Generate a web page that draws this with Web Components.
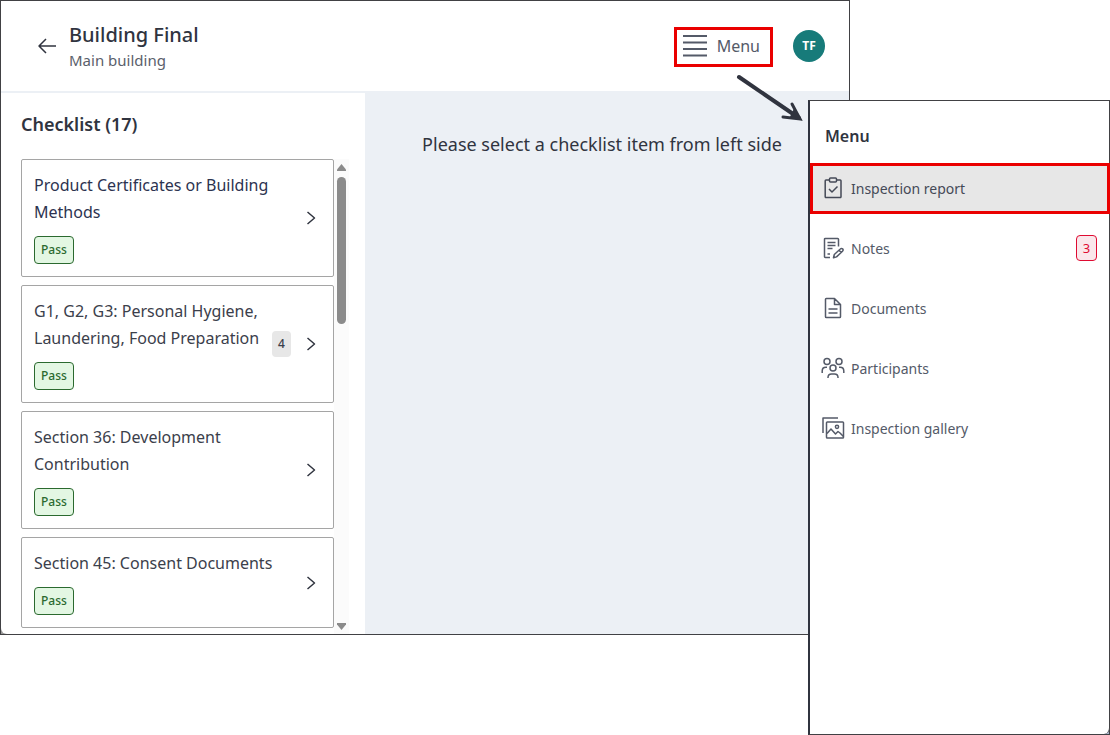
<!DOCTYPE html>
<html lang="en">
<head>
<meta charset="utf-8">
<title>Building Final</title>
<style>
  body { margin: 0; background: #fff; color: #30343f; font: 16px/24px "Noto Sans", sans-serif; }
</style>
</head>
<body>
<inspection-page>
  <app-window slot="window">
    <app-header slot="header" initials="TF">
      <span slot="title">Building Final</span>
      <span slot="subtitle">Main building</span>
    </app-header>
    <check-list slot="side">
      <span slot="heading">Checklist (17)</span>
      <check-item status="Pass" accent>Product Certificates or Building Methods</check-item>
      <check-item status="Pass" count="4">G1, G2, G3: Personal Hygiene, Laundering, Food Preparation</check-item>
      <check-item status="Pass">Section 36: Development Contribution</check-item>
      <check-item status="Pass">Section 45: Consent Documents</check-item>
    </check-list>
    <span>Please select a checklist item from left side</span>
  </app-window>
  <menu-drawer slot="drawer">
    <span slot="heading">Menu</span>
    <menu-item icon="report" current>Inspection report</menu-item>
    <menu-item icon="notes" count="3">Notes</menu-item>
    <menu-item icon="document">Documents</menu-item>
    <menu-item icon="people">Participants</menu-item>
    <menu-item icon="gallery">Inspection gallery</menu-item>
  </menu-drawer>
  <callout-arrow slot="callout"></callout-arrow>
</inspection-page>

<script>
const ICONS = {
  back: '<path d="M21 12H4M11 5l-7 7 7 7"/>',
  chevron: '<path d="M8.500 6l7 6-7 6"/>',
  lines: '<path stroke-width="2" d="M0 2h24M0 8.500h24M0 15h24M0 21.500h24"/>',
  report: '<path d="M8.500 4H5a.8.8 0 0 0-.8.8v16a.8.8 0 0 0 .8.8h14.200a.8.8 0 0 0 .8-.8v-16a.8.8 0 0 0-.8-.8h-3.700"/><rect x="8.500" y="2" width="7" height="4" rx="1"/><path d="M8 13l3 3 5.500-5.500"/>',
  notes: '<path d="M17.500 10.500V3.200a.8.8 0 0 0-.8-.8H4.300a.8.8 0 0 0-.8.8v17.500a.8.8 0 0 0 .8.8H9M6.500 6.500h8M6.500 9.500h8M6.500 12.500h5M6.500 18h2.500"/><path d="M12.500 21.800l.8-3.300 6-5.500c.8-.8 1.600-.8 2.300-.1s.7 1.500-.1 2.300l-6 5.700zM18 14.200l2.400 2.400"/>',
  document: '<path d="M13.500 2.500H5.300a.8.8 0 0 0-.8.8v17.400a.8.8 0 0 0 .8.8h13.400a.8.8 0 0 0 .8-.8V8.500zM13.500 2.500v6h6M7.500 13h9M7.500 17h9"/>',
  people: '<circle cx="6" cy="5.500" r="3"/><circle cx="18" cy="5.500" r="3"/><circle cx="12" cy="12" r="3"/><path d="M7 22v-.5C7 19.200 8.500 18 10.500 18h3c2 0 3.500 1.200 3.500 3.500v.5M1.200 17v-2c0-2.300 1.500-3.700 3.700-3.700H6M22.800 17v-2c0-2.300-1.500-3.700-3.700-3.700H18"/>',
  gallery: '<path d="M17 2H2v15"/><rect x="5.500" y="6" width="17" height="16" rx=".8"/><circle cx="16" cy="10.800" r="1.600"/><path d="M6 17.500l4-4.500 4.500 5 2.500-2.500 2 1.500 3.500 3.500"/>'
};

// Registers an element whose shadow root is cloned from the given markup.
function define(name, markup, setup) {
  const template = document.createElement('template');
  template.innerHTML = '<style>*{box-sizing:border-box}:host{display:block;box-sizing:border-box}button{font:inherit;color:inherit;margin:0;padding:0;border:0;background:none;text-align:left;cursor:pointer}</style>' + markup;
  customElements.define(name, class extends HTMLElement {
    constructor() {
      super();
      this.attachShadow({ mode: 'open' }).append(template.content.cloneNode(true));
    }
    connectedCallback() { if (setup) setup(this, this.shadowRoot); }
  });
}

define('ui-icon', `<style>
  :host { flex: none; width: 24px; height: 24px; }
  svg { display: block; width: 100%; height: 100%; fill: none; stroke: currentColor; stroke-width: 1.5; stroke-linejoin: round; }
</style><svg viewBox="0 0 24 24" aria-hidden="true"></svg>`, (el, root) => {
  root.querySelector('svg').innerHTML = ICONS[el.getAttribute('name')];
});

define('inspection-page', `<style>
  :host { display: grid; position: relative; min-height: 100vh;
    grid-template-columns: 1fr 42px 260px; grid-template-rows: 100px 1fr 100px; }
  slot[name=window]::slotted(*) { grid-area: 1 / 1 / 3 / 3; }
  slot[name=drawer]::slotted(*) { grid-area: 2 / 2 / 4 / 4; }
</style>
<slot name="window"></slot><slot name="drawer"></slot><slot name="callout"></slot>`);

define('callout-arrow', `<style>
  :host { position: absolute; top: 70px; right: 300px; width: 80px; height: 60px; pointer-events: none; }
  svg { display: block; fill: none; stroke: #30343f; stroke-width: 4; stroke-linecap: round; stroke-linejoin: miter; }
</style>
<svg width="80" height="60" viewBox="0 0 80 60" aria-hidden="true"><path d="M9 7l60 41"/><path stroke-width="3" d="M62 34l8 15-17-2"/><path stroke-width="2" fill="#30343f" d="M64 41l6 8-9-2z"/></svg>`);

define('app-window', `<style>
  :host { display: flex; flex-direction: column; border: 1px solid #414144; background: #9a9a9a; }
  .body { flex: 1; display: grid; grid-template-columns: 364px 1fr; }
  main { background: #ecf0f5; padding: 37px 10px 0 0; text-align: center; font-size: 18px; line-height: 28px; }
</style>
<slot name="header"></slot>
<div class="body"><slot name="side"></slot><main><slot></slot></main></div>`);

define('app-header', `<style>
  :host { background: #fff; border-bottom: 2px solid #ecf0f5; }
  header { display: flex; align-items: center; height: 90px; padding: 0 24px 0 34px; }
  .back { display: flex; margin-right: 10px; }
  .names { flex: 1; display: flex; flex-direction: column; }
  h1 { margin: 0; font-size: 20px; line-height: 28px; font-weight: 500; }
  p { margin: 0; font-size: 15px; line-height: 22px; color: #5a606b; }
  .menu { display: flex; align-items: center; gap: 10px; height: 40px; padding: 0 10px 2px 6px; margin: 2px 20px 0 0;
    border: 3px solid #ea0000; color: #545a68; }
  .avatar { width: 32px; height: 32px; border-radius: 50%; background: #177b7a; color: #fff;
    font-size: 12px; line-height: 32px; font-weight: 700; text-align: center; }
</style>
<header>
  <button class="back" aria-label="Back"><ui-icon name="back"></ui-icon></button>
  <div class="names"><h1><slot name="title"></slot></h1><p><slot name="subtitle"></slot></p></div>
  <button class="menu"><ui-icon name="lines"></ui-icon>Menu</button>
  <div class="avatar"></div>
</header>`, (el, root) => {
  root.querySelector('.avatar').textContent = el.getAttribute('initials');
});

define('check-list', `<style>
  :host { background: #fff; border-bottom-left-radius: 6px; padding: 18px 16px 0 20px; display: flex; flex-direction: column; }
  h2 { margin: 0 0 22px; font-size: 18px; line-height: 26px; font-weight: 600; }
  .area { flex: 1; display: grid; grid-template-columns: 1fr 15px; }
  .items { display: flex; flex-direction: column; gap: 8px; padding-bottom: 6px; }
  .bar { display: flex; flex-direction: column; align-items: center; gap: 6px; padding: 5px 0 4px; background: #fbfbfb; }
  .bar svg { fill: #8b8b8b; }
  .thumb { width: 9px; height: 147px; border-radius: 5px; background: #8b8b8b; margin-bottom: auto; }
</style>
<h2><slot name="heading"></slot></h2>
<div class="area">
  <div class="items"><slot></slot></div>
  <div class="bar" aria-hidden="true">
    <svg width="9" height="7"><path d="M4.500 0L9 5.500V7H0V5.500z"/></svg>
    <div class="thumb"></div>
    <svg width="9" height="7"><path d="M4.500 7L9 1.500V0H0V1.500z"/></svg>
  </div>
</div>`);

define('check-item', `<style>
  :host { color: #3b404b; }
  :host([accent]) { color: #2c3350; }
  button { display: flex; align-items: center; width: 100%; padding: 12px 10px 12px 12px; border: 1px solid #a5a5a5; border-radius: 2px; line-height: 27px; }
  .text { flex: 1; display: flex; flex-direction: column; align-items: flex-start; gap: 10px; }
  .status { height: 28px; padding: 0 6px; border: 1px solid #2b6a2f; border-radius: 4px; background: #e3f7e3; color: #2b6a2f; font-size: 12px; line-height: 26px; font-weight: 500; }
  .count { width: 19px; height: 26px; margin-right: 8px; border-radius: 4px; background: #e7e7e7; font-size: 12px; line-height: 26px; font-weight: 500; text-align: center; }
  .count:empty { display: none; }
  ui-icon { color: #30343f; }
</style>
<button><span class="text"><span><slot></slot></span><span class="status"></span></span><span class="count"></span><ui-icon name="chevron"></ui-icon></button>`, (el, root) => {
  root.querySelector('.status').textContent = el.getAttribute('status');
  root.querySelector('.count').textContent = el.getAttribute('count') || '';
});

define('menu-drawer', `<style>
  :host { display: flex; border: 1px solid #414144; border-left: 2px solid #30343f; background: #aab4cc; }
  nav { flex: 1; display: flex; flex-direction: column; gap: 9px; margin-right: -1px; padding: 23px 0; background: #fff; border-right: 1px solid #414144; border-bottom-right-radius: 6px; min-width: 0; }
  h2 { margin: 0 0 6px; padding-left: 15px; font-size: 16px; line-height: 24px; font-weight: 600; }
</style>
<nav><h2><slot name="heading"></slot></h2><slot></slot></nav>`);

define('menu-item', `<style>
  :host { color: #545a68; margin-right: -1px; }
  :host([current]) { background: #e7e7e7; color: #454a57; outline: 3px solid #ea0000; outline-offset: -3px; }
  button { display: flex; align-items: flex-start; gap: 6px; width: 100%; height: 51px; padding: 12px 13px 0 11px; font-size: 14px; line-height: 28px; }
  ui-icon { height: 26px; }
  .label { flex: 1; }
  .count { width: 21px; height: 26px; border: 1px solid #df0b32; border-radius: 4px; background: #fae7eb; color: #df0b32; font-size: 13px; line-height: 24px; text-align: center; }
  .count:empty { display: none; }
</style>
<button><ui-icon></ui-icon><span class="label"><slot></slot></span><span class="count"></span></button>`, (el, root) => {
  const icon = root.querySelector('ui-icon');
  icon.setAttribute('name', el.getAttribute('icon'));
  icon.shadowRoot.querySelector('svg').innerHTML = ICONS[el.getAttribute('icon')];
  root.querySelector('.count').textContent = el.getAttribute('count') || '';
});
</script>
</body>
</html>
